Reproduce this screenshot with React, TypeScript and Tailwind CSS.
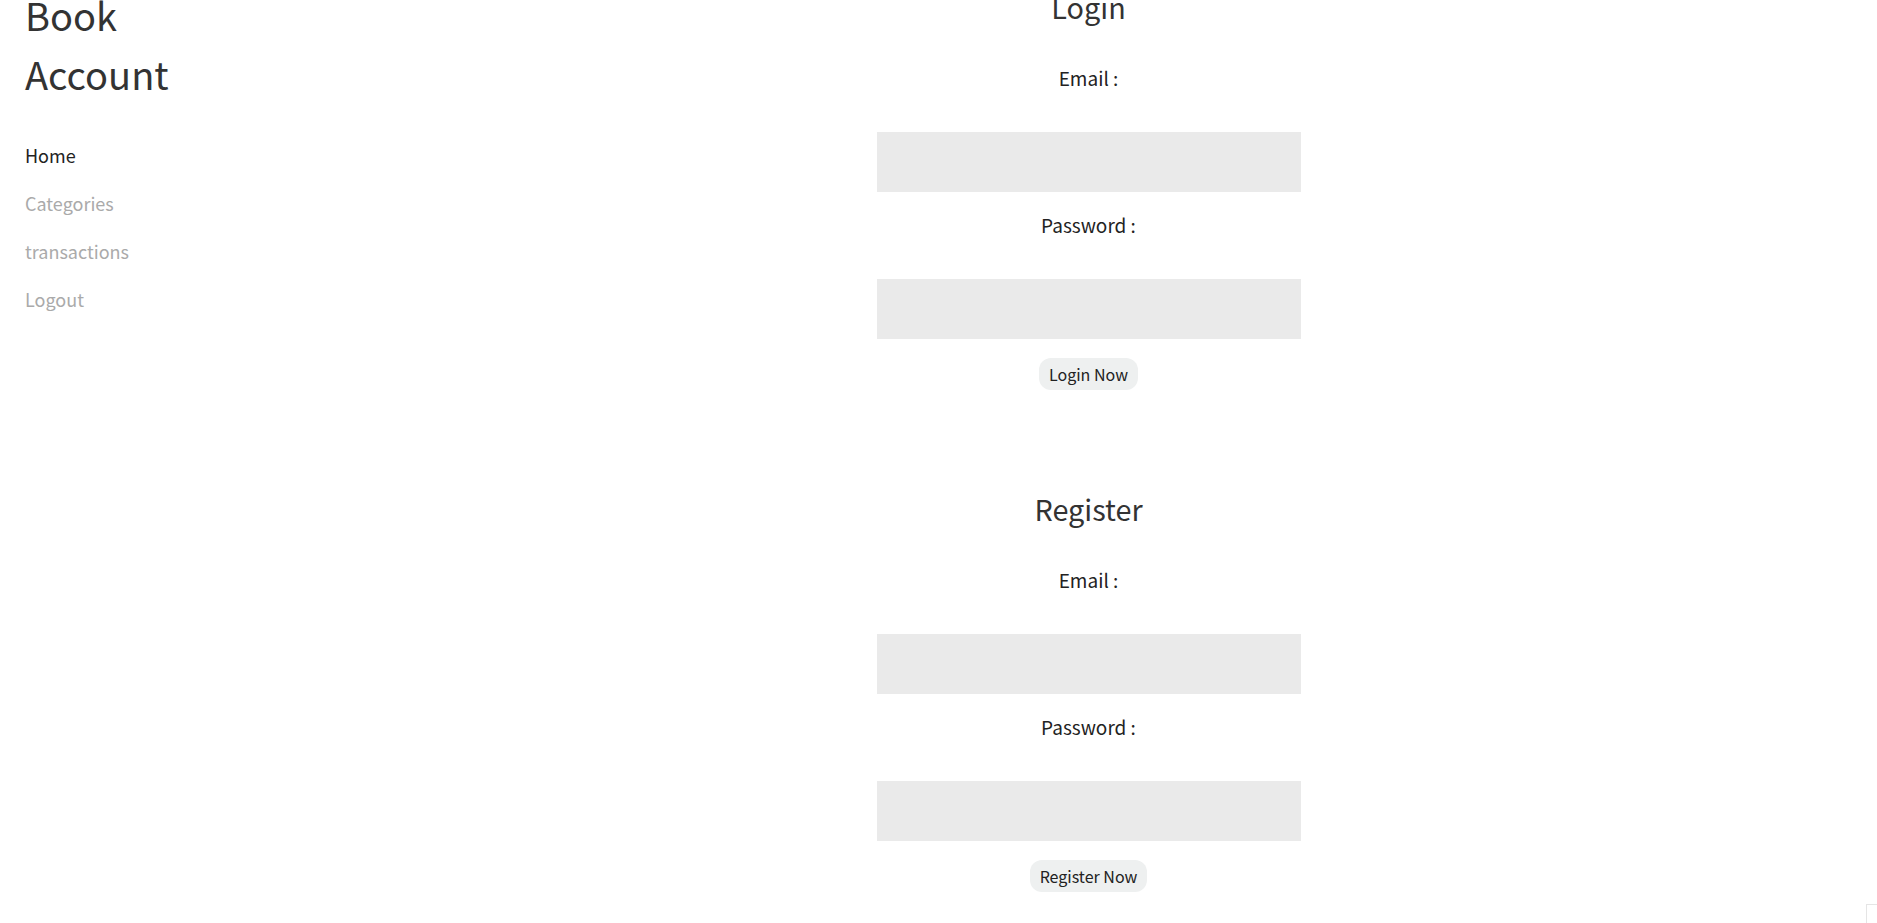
const navItems = [
  { label: 'Home', active: true },
  { label: 'Categories', active: false },
  { label: 'transactions', active: false },
  { label: 'Logout', active: false },
];

function AuthForm({ title, action }: { title: string; action: string }) {
  return (
    <section className="flex flex-col items-center">
      <h2 className="text-[28.8px] leading-[44px] text-[#333]">{title}</h2>
      <label className="mt-[37px] text-[19px] leading-[24px] text-[#222]">Email :</label>
      <input type="email" className="mt-[42px] h-[60px] w-[424px] bg-[#eaeaea] outline-none" />
      <label className="mt-[21px] text-[19px] leading-[24px] text-[#222]">Password :</label>
      <input type="password" className="mt-[42px] h-[60px] w-[424px] bg-[#eaeaea] outline-none" />
      <button className="mt-[19px] h-[32px] rounded-[12px] bg-[#eef0f0] px-[10px] text-[16px] leading-[32px] text-[#222]">
        {action}
      </button>
    </section>
  );
}

export default function App() {
  return (
    <div className="relative h-[923px] overflow-hidden bg-white font-['Noto_Sans_CJK_KR','Noto_Sans',sans-serif]">
      <div className="-mt-[15px] flex">
        <aside className="w-[300px] shrink-0 pl-[25px]">
          <h1 className="max-w-[200px] text-[38px] leading-[59px] text-[#333]">
            Book
            <br />
            Account
          </h1>
          <nav className="mt-[28px] flex flex-col">
            {navItems.map((item) => (
              <a
                key={item.label}
                href="#"
                className={
                  item.active
                    ? 'text-[18px] leading-[48px] text-[#222]'
                    : 'text-[18px] leading-[48px] text-[#aaa]'
                }
              >
                {item.label}
              </a>
            ))}
          </nav>
        </aside>

        <main className="flex flex-1 flex-col items-center">
          <AuthForm title="Login" action="Login Now" />
          <div className="mt-[97px]">
            <AuthForm title="Register" action="Register Now" />
          </div>
        </main>
      </div>

      <div className="absolute bottom-0 right-0 h-[19px] w-[11px] border-l border-t border-[#e5e5e5]" />
    </div>
  );
}
